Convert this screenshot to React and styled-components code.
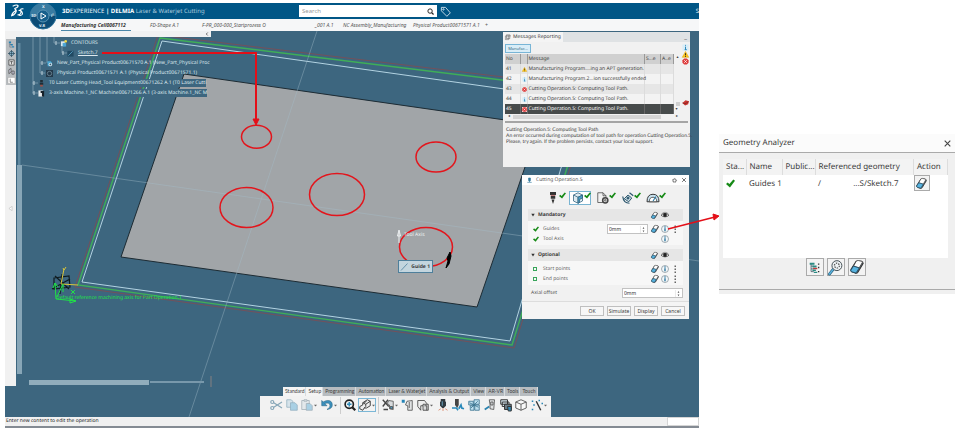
import React from 'react';
import styled, { createGlobalStyle, css } from 'styled-components';

const GlobalStyle = createGlobalStyle`
  *, *::before, *::after { box-sizing: border-box; }
  body { margin: 0; background: #fff; }
  body, button, input { font-family: "Noto Sans", "Open Sans", sans-serif; }
  body { font-size: 6px; line-height: 8px; color: #3c3c3c; text-rendering: geometricPrecision; }
  button { margin: 0; padding: 0; border: 0; background: none; color: inherit; font-size: inherit; line-height: inherit; }
  ul { margin: 0; padding: 0; list-style: none; }
  table { border-collapse: collapse; table-layout: fixed; width: 100%; }
  th, td { padding: 0; font-weight: 400; text-align: left; white-space: nowrap; }
  p, h1, h2, h3 { margin: 0; font-size: inherit; }
`;

/* ---------- page ---------- */
const Page = styled.div`
  position: relative;
  display: flex;
  min-height: 100vh;
  padding: 3px 5px 7px;
  gap: 20px;
`;
const Shell = styled.main`
  flex: 1;
  min-width: 0;
  display: flex;
  flex-direction: column;
`;
const Side = styled.aside`
  flex: 0 0 236px;
  padding-top: 131px;
`;
const Annotations = styled.svg`
  position: absolute;
  top: 0;
  left: 0;
  pointer-events: none;
`;
const Glyph = styled.svg`
  display: block;
  flex: none;
  width: ${(p) => p.$s || 8}px;
  height: ${(p) => p.$s || 8}px;
  overflow: visible;
`;

/* ---------- icons ---------- */
const Check = ({ s }) => (
  <Glyph $s={s} viewBox="0 0 16 16"><path d="M0 9l3-3 3 3 7-8 3 2-9 12z" fill="#178a17" /></Glyph>
);
const Eraser = ({ s }) => (
  <Glyph $s={s} viewBox="0 0 16 16" strokeLinejoin="round">
    <path d="M7 1.500h6q2 .5 2 2.500L9 14q-1 1.500-3 1l-4-1.500Q.5 12.500 1 11z" fill="#54646e" stroke="#333" strokeWidth="1.200" />
    <path d="M7 1.500Q8 .5 9.500 .6L13.500 1.500q1 .5.5 1.500L10.500 9 4 7z" fill="#fdfdfd" stroke="#444" />
    <path d="M4 7l6.500 2-3 5q-.5.8-1.500.6L2 13.500Q.6 13 1 11.500z" fill="#58b4e0" stroke="#234f68" />
  </Glyph>
);
const Info = ({ s }) => (
  <Glyph $s={s} viewBox="0 0 16 16">
    <circle cx="8" cy="8" r="7" fill="#f4f8fa" stroke="#7c8b94" strokeWidth="1.400" />
    <path d="M8 6.500v6" stroke="#1f6c98" strokeWidth="2.600" /><circle cx="8" cy="4" r="1.500" fill="#1f6c98" />
  </Glyph>
);
const Eye = ({ s }) => (
  <Glyph $s={s} viewBox="0 0 16 16">
    <path d="M0 8.500Q8 1 16 8.500 8 15 0 8.500z" fill="#fff" stroke="#333" strokeWidth="1.400" />
    <circle cx="8" cy="8" r="3.800" fill="#222" /><path d="M1 6Q8-1 15 6" fill="none" stroke="#555" />
  </Glyph>
);
const Warn = ({ s }) => (
  <Glyph $s={s} viewBox="0 0 16 16">
    <path d="M8 1l7.500 13.500H.5z" fill="#ffc61a" stroke="#d69b00" /><path d="M8 5v5M8 11.500v2" stroke="#222" strokeWidth="2" />
  </Glyph>
);
const Note = ({ s }) => (
  <Glyph $s={s} viewBox="0 0 16 16">
    <path d="M1 1h14v14H1z" fill="#d7edf8" /><path d="M8 6v7M6 13h5M8 2v2" stroke="#2483b8" strokeWidth="2.200" />
  </Glyph>
);
const Fault = ({ s, boxed }) => (
  <Glyph $s={s} viewBox="0 0 16 16">
    {boxed && <path d="M0 0h16v16H0z" fill="#f6c9c9" />}
    <path d="M5 1h6l4 4v6l-4 4H5l-4-4V5z" fill="#de3b3b" /><path d="M5 5l6 6M11 5l-6 6" stroke="#fff" strokeWidth="1.800" />
  </Glyph>
);
const Dots = () => (
  <Glyph $s={8} viewBox="0 0 16 16"><path d="M7 1h3v3H7zM7 7h3v3H7zM7 13h3v3H7z" fill="#666" /></Glyph>
);
const Cross = ({ s }) => (
  <Glyph $s={s} viewBox="0 0 16 16"><path d="M3 3l10 10M13 3L3 13" stroke="#444" strokeWidth="2" /></Glyph>
);
const Gear = ({ s }) => (
  <Glyph $s={s} viewBox="0 0 16 16" fill="none" stroke="#444">
    <circle cx="8" cy="8" r="4.500" strokeWidth="2" /><circle cx="8" cy="8" r="6.500" strokeWidth="2" strokeDasharray="2.500 2.600" />
  </Glyph>
);
const TreeGlyph = ({ s }) => (
  <Glyph $s={s} viewBox="0 0 16 16">
    <path d="M3 2v12h4M3 6h4M3 10h4" fill="none" stroke="#345" />
    <path d="M1 1h7v3H1zM5 5h6v3H5z" fill="#2b8a83" /><path d="M6 8.500h6v2H6z" fill="#c43636" />
    <path d="M5 11h5v2H5zM7 14h5v2H7z" fill="#2b8a83" /><path d="M13 2h2v2h-2zM13 7h2v2h-2zM13 13h2v2h-2z" fill="#333" />
  </Glyph>
);
const Lens = ({ s }) => (
  <Glyph $s={s} viewBox="0 0 16 16">
    <path d="M5.500 10L1.500 15" stroke="#28617f" strokeWidth="3" strokeLinecap="round" />
    <path d="M5.500 10L1.500 15" stroke="#5bb3dd" strokeWidth="1.600" strokeLinecap="round" />
    <circle cx="9.500" cy="6" r="5.300" fill="#eef3f5" stroke="#3d474d" />
    <circle cx="9.500" cy="6" r="2.600" fill="none" stroke="#555" strokeWidth="1.400" strokeDasharray="1.500 1.200" />
  </Glyph>
);
const Search = () => (
  <Glyph $s={7} viewBox="0 0 16 16" fill="none" stroke="#222" strokeWidth="2.200"><circle cx="7" cy="7" r="5" /><path d="M10.500 10.500L15 15" strokeWidth="3" /></Glyph>
);

/* ---------- top bar ---------- */
const TopBar = styled.header`
  position: relative;
  flex: 0 0 16px;
  display: grid;
  grid-template-columns: 57px 237px 138px 1fr auto;
  align-items: center;
  background: #005686;
  color: #fff;
`;
const Logo = styled.svg`
  width: 13px;
  height: 14px;
  margin-left: 6px;
`;
const Product = styled.h1`
  font-size: 6px;
  font-weight: 400;
  color: #a9cadd;
  white-space: nowrap;
  b { color: #fff; }
  span { color: #e5eff5; }
`;
const SearchBox = styled.label`
  display: flex;
  align-items: center;
  height: 12px;
  padding: 0 3px;
  background: #fff;
`;
const SearchInput = styled.input`
  flex: 1;
  min-width: 0;
  padding: 0;
  border: 0;
  outline: 0;
  font-size: 6px;
  &::placeholder { color: #999; }
`;
const Compass = styled.svg`
  position: absolute;
  left: 24px;
  top: 0;
  width: 28px;
  height: 28px;
  z-index: 2;
`;
const Tag = styled.svg`
  width: 11px;
  height: 11px;
  margin-left: 3px;
`;
const TabStrip = styled.nav`
  flex: 0 0 12px;
  display: grid;
  grid-template-columns: 89px 52px 113px 28px 70px 72px auto;
  justify-content: start;
  align-items: stretch;
  padding-left: 56px;
  background: #f6f7f8;
`;
const DocTab = styled.button`
  justify-self: start;
  text-align: left;
  white-space: nowrap;
  font-style: italic;
  font-weight: ${(p) => (p.$active ? 700 : 400)};
  font-size: 5px;
  color: #555;
  border-bottom: 1px solid transparent;
  ${(p) => p.$active && css`
    min-width: 70px;
    color: #333;
    border-color: #4a86a8;
  `}
`;

/* ---------- viewport ---------- */
const Viewport = styled.section`
  position: relative;
  flex: 1;
  min-height: 386px;
  overflow: hidden;
  display: flex;
  align-items: flex-start;
  background: #3d667f;
`;
const Scene = styled.svg`
  position: absolute;
  inset: 0;
  width: 100%;
  height: 100%;
  font-family: "Noto Sans", sans-serif;
`;
const SideRail = styled.div`
  position: relative;
  width: 11px;
  height: 355px;
  background: #f1f1f1;
`;
const RailTools = styled.div`
  margin: 8px 0 0 1px;
  display: flex;
  flex-direction: column;
  align-items: center;
  gap: 1px;
  padding: 1px 0;
  background: #b9bdc0;
`;
const RailButton = styled.button`
  height: 8px;
`;
const RailHandle = styled.button`
  display: block;
  margin: 121px 0 0 3px;
`;
const TreePanel = styled.div`
  position: relative;
  width: 195px;
`;
const TreeCap = styled.div`
  display: flex;
  align-items: center;
  justify-content: flex-end;
  height: 6px;
  padding-right: 2px;
  background: #f0f1f2;
`;
const TreeRows = styled.ul`
  padding-top: 1px;
`;
const TreeRow = styled.li`
  display: flex;
  align-items: center;
  gap: 4px;
  height: 10px;
  padding-left: ${(p) => p.$pad}px;
  color: #dfe9ee;
  font-size: 5px;
  white-space: nowrap;
  a { color: inherit; }
  span { ${(p) => p.$band && css`background: #3d667f;`} }
`;

const Guide = styled.div`
  position: absolute;
  left: 393px;
  top: 229px;
  display: flex;
  align-items: center;
  justify-content: space-between;
  width: 35px;
  height: 13px;
  padding: 0 2px 0 1px;
  border: 1px solid #4e7f9b;
  background: #c3d5de;
  font-size: 5px;
  font-weight: 700;
  white-space: nowrap;
`;

/* ---------- floating windows ---------- */
const Window = styled.section`
  position: absolute;
  right: ${(p) => p.$right}px;
  top: ${(p) => p.$top}px;
  width: ${(p) => p.$width}px;
  background: #f1f1f1;
`;
const MessageHead = styled.header`
  display: flex;
  justify-content: space-between;
  align-items: center;
  height: 10px;
  padding-right: 3px;
  background: #dfe2e4;
`;
const HeadTab = styled.h2`
  display: flex;
  align-items: center;
  gap: 2px;
  height: 10px;
  padding: 0 2px;
  background: #f4f4f4;
  font-weight: 400;
  font-size: 5px;
`;
const MessageBody = styled.div`
  display: grid;
  grid-template-columns: 1fr 9px;
  padding: 2px 0 0 2px;
`;
const Filter = styled.button`
  display: block;
  width: 26px;
  height: 9px;
  margin: 0 0 1px;
  border: 1px solid #78b5d6;
  background: #d9edf7;
  font-size: 4px;
  line-height: 7px;
  color: #36697f;
`;
const LogArea = styled.div`
  display: grid;
  grid-template-columns: 169px 1fr;
`;
const LogTable = styled.table`
  font-size: 5px;
  th { height: 10px; border-right: 1px solid #999; background: #d0d0d0; }
  th, td { padding-left: 1px; }
`;
const LogRow = styled.tr`
  td { height: 10px; border-right: 1px solid #dcdcdc; background: ${(p) => (p.$alt ? '#e6e6e6' : '#f3f3f3')}; }
  ${(p) => p.$selected && css`
    color: #fff;
    td { background: #474b4b; border-right-color: #666; }
  `}
`;
const VScroll = styled.div`
  display: flex;
  flex-direction: column;
  align-items: center;
  justify-content: space-between;
  font-size: 4px;
`;
const Thumb = styled.div`
  width: 4px;
  height: 4px;
  background: #cfcfcf;
`;
const HScroll = styled.div`
  display: flex;
  justify-content: space-between;
  align-items: center;
  height: 6px;
  padding: 0 3px;
  font-size: 4px;
`;
const HThumb = styled.div`
  flex: 1;
  height: 4px;
  margin: 0 15px 0 3px;
  background: #d5d5d5;
`;
const Severity = styled.div`
  display: flex;
  flex-direction: column;
  align-items: center;
`;
const Purge = styled.button`
  margin-top: 34px;
`;
const Detail = styled.div`
  min-height: 44px;
  margin: 1px 2px 2px;
  padding: 4px 1px;
  border-top: 2px solid #a5a5a5;
  font-family: Lato, sans-serif;
  font-size: 5px;
  line-height: 6px;
  white-space: nowrap;
`;

const DialogHead = styled.header`
  display: flex;
  align-items: center;
  gap: 4px;
  height: 10px;
  padding: 0 2px 0 5px;
  background: #fff;
  h2 { flex: 1; font-weight: 400; font-size: 5px; color: #555; }
`;
const Steps = styled.div`
  display: flex;
  gap: 3px;
  padding: 6px 0 4px 22px;
`;
const Step = styled.button`
  display: flex;
  align-items: center;
  width: 22px;
  height: 14px;
  padding: 0 1px 0 2px;
  border: 1px solid ${(p) => (p.$active ? '#79b4d2' : 'transparent')};
  background: ${(p) => (p.$active ? '#fff' : 'transparent')};
`;
const StepCheck = styled.span`
  align-self: flex-start;
`;
const Groups = styled.div`
  display: flex;
  flex-direction: column;
  gap: 4px;
  padding: 0 6px;
`;
const Group = styled.section`
  background: #f7f7f7;
`;
const GroupHead = styled.header`
  display: grid;
  grid-template-columns: 10px 1fr 10px 10px 12px;
  align-items: center;
  height: 12px;
  background: #e6e6e6;
  h3 { font-size: 5px; }
  svg:first-child { margin-left: 3px; }
`;
const Rows = styled.div`
  padding: 3px 0 1px;
`;
const Field = styled.div`
  display: grid;
  grid-template-columns: 10px 1fr auto 10px 10px 12px;
  align-items: center;
  height: 10px;
  padding-left: 5px;
  font-size: 5px;
  color: #666;
`;
const Spin = styled.span`
  display: flex;
  align-items: center;
  width: ${(p) => p.$w}px;
  height: 10px;
  margin-right: ${(p) => p.$gap || 0}px;
  border: 1px solid #c2c2c2;
  background: #fff;
`;
const SpinInput = styled.input`
  flex: 1;
  min-width: 0;
  width: 10px;
  padding: 0 1px;
  border: 0;
  outline: 0;
  background: none;
  font-size: 5px;
  color: #333;
`;
const Square = styled.input`
  appearance: none;
  width: 4px;
  height: 4px;
  margin: 0;
  border: 1px solid #39a55b;
`;
const Offset = styled.div`
  display: flex;
  align-items: center;
  justify-content: space-between;
  padding: 3px 6px 3px 9px;
  font-size: 5px;
  color: #555;
`;
const Actions = styled.footer`
  display: flex;
  justify-content: flex-end;
  gap: 3px;
  padding: 4px 4px 3px;
  border-top: 1px solid #ddd;
  background: #f4f4f4;
`;
const PushButton = styled.button`
  width: 24px;
  height: 10px;
  border: 1px solid #bfbfbf;
  background: #f7f7f7;
  font-size: 5px;
  line-height: 8px;
`;

/* ---------- action bar ---------- */
const ActionBar = styled.div`
  position: absolute;
  left: 255px;
  bottom: 0;
`;
const ActionTabs = styled.div`
  display: flex;
  width: max-content;
  margin-left: 23px;
`;
const ActionTab = styled.button`
  height: 9px;
  padding: 0 1px 0 2px;
  border-right: 1px solid #d8dbdd;
  background: ${(p) => (p.$active ? '#f4f4f4' : '#b7bcc0')};
  font-family: Lato, sans-serif;
  font-size: 5px;
  line-height: 9px;
  white-space: nowrap;
`;
const ToolRow = styled.div`
  display: flex;
  align-items: center;
  justify-content: space-between;
  height: 21px;
  width: 291px;
  padding: 0 3px 3px 9px;
  background: #f2f2f2;
`;
const Tool = styled.button`
  display: flex;
  align-items: center;
  gap: 1px;
  border: 1px solid ${(p) => (p.$on ? '#7bb7d6' : 'transparent')};
`;
const Divider = styled.div`
  width: 1px;
  height: 17px;
  background: #cdcdcd;
`;
const StatusBar = styled.footer`
  flex: 0 0 11px;
  display: flex;
  justify-content: space-between;
  border-bottom: 2px solid #848b93;
  background: #f0f0f0;
  padding-left: 1px;
  font-size: 5px;
  line-height: 9px;
  color: #222;
`;
const CommandInput = styled.input`
  width: 32px;
  height: 9px;
  padding: 0;
  border: 1px solid #d5d5d5;
  background: #fff;
  font-size: 5px;
`;

/* ---------- analyzer ---------- */
const Analyzer = styled.section`
  padding-bottom: 4px;
  background: #f0f0f0;
`;
const AnalyzerHead = styled.header`
  display: flex;
  justify-content: space-between;
  align-items: center;
  height: 19px;
  padding: 0 3px 0 4px;
  border-bottom: 1px solid #aaa;
  background: #fbfbfb;
  h2 { font-size: 8px; font-weight: 400; }
`;
const AnalyzerBody = styled.div`
  padding: 6px 7px 13px 4px;
  border-bottom: 1px solid #aaa;
`;
const TableWrap = styled.div`
  min-height: 99px;
  background: #fff;
`;
const GeoTable = styled.table`
  font-size: 8px;
  line-height: 12px;
  th { height: 16px; border-right: 1px solid #ddd; background: #f3f3f3; }
  td { height: 17px; }
  th, td { padding-left: 3px; }
  .action { padding-left: 0; }
`;
const Reference = styled.span`
  display: flex;
  justify-content: space-between;
  padding-right: 15px;
`;
const SquareButton = styled.button`
  display: inline-flex;
  align-items: center;
  justify-content: center;
  width: ${(p) => p.$s}px;
  height: ${(p) => p.$s}px;
  border: 1px solid #aaa;
  background: #f3f3f3;
`;
const AnalyzerTools = styled.div`
  display: flex;
  justify-content: center;
  gap: 3px;
`;

const logs = [
  [41, Warn, 'Manufacturing Program....ing an APT generation.'],
  [42, Note, 'Manufacturing Program.2...ion successfully ended'],
  [43, Fault, 'Cutting Operation.5: Computing Tool Path.'],
  [44, Note, 'Cutting Operation.5: Computing Tool Path.'],
  [45, Fault, 'Cutting Operation.5: Computing Tool Path.'],
];

const stepArt = [
  <g key="a"><path d="M4 0h8v4H4zM5 5h6v4H5zM6 10h4l-2 6z" fill="#333" /><path d="M5 4.500h6" stroke="#b55" /></g>,
  <g key="b" fill="#dceaf1" stroke="#2d607c"><path d="M2 4l6-3 6 3v8l-6 3-6-3z" /><path d="M2 4l6 3 6-3M8 7v8" fill="none" /><path d="M8 7l6-3v4l-4 2v4l-2 1z" fill="#4b9dc4" /></g>,
  <g key="c" fill="none" stroke="#444"><path d="M9 14H1V1h7l4 4v2" /><path d="M8 1v4h4" /><circle cx="11" cy="11" r="3.500" strokeWidth="2" fill="#ddd" /><circle cx="11" cy="11" r="1" /></g>,
  <g key="d" fill="none" stroke="#2b566d"><path d="M3 9l5-5 5 4-4 5z" fill="#cfdfe7" strokeWidth="1.300" /><path d="M1 6q1 9 9 9M10 1l5 4" strokeWidth="1.600" /><circle cx="8" cy="8" r="1.500" fill="#2b566d" /></g>,
  <g key="e" fill="#fff" stroke="#333"><path d="M0 13Q0 3 8 3t8 10z" fill="#c9e2ef" strokeWidth="1.300" /><path d="M3 13q0-6 5-6t5 6z" /><path d="M8 12l4-6" stroke="#2d7ca5" strokeWidth="1.500" /></g>,
];

const toolArt = {
  cut: <g fill="none" stroke="#87a7b8" strokeWidth="1.600"><circle cx="3" cy="4" r="2" /><circle cx="3" cy="12" r="2" /><path d="M5 5l11 7M5 11l11-7" /></g>,
  copy: <g fill="#d6e3ea" stroke="#91afbf"><path d="M1 1h6l2 2v8H1z" /><path d="M6 5h6l3 3v7H6z" fill="#a9d0e4" /></g>,
  paste: <g fill="#e3e8eb" stroke="#a0aeb6"><path d="M1 2h10v12H1z" /><path d="M4 1h4v2H4z" /><path d="M7 6h5l3 3v6H7z" fill="#a9d0e4" /></g>,
  undo: <path d="M1 2v7h7L5 6q6-2 7 2 1 3-4 6 7-1 7-6 0-6-6-6-3 0-6 2z" fill="#3d91bd" stroke="#276686" strokeWidth=".8" />,
  zoom: <g fill="none" stroke="#222"><circle cx="7" cy="7" r="5.500" strokeWidth="2.200" /><path d="M11 11l4 4" strokeWidth="3" /><path d="M7 4v6M4 7h6" stroke="#318cba" strokeWidth="2" /></g>,
  part: <g fill="#eee" stroke="#333" strokeWidth="1.200"><path d="M1 10l4-2V5l6-4 4 2v6l-5 3H7l-2 3-4-2z" /><path d="M5 5l4 2 6-4M9 7v3l-2 2" fill="none" /><path d="M7 5l3-2" /></g>,
  mill: <g fill="#d9dcde" stroke="#454545"><path d="M9 2l6 1v11l-5-1V8L7 6z" /><path d="M1 1l8 9M8 1L1 10M2 14h6" fill="none" strokeWidth="1.800" /><path d="M11 10h3v3h-3z" fill="#4d9dc5" /></g>,
  machine: <g fill="#e1e3e4" stroke="#444"><path d="M8 3l7-1v13H9V9L6 8z" /><path d="M11 4v8" /><path d="M1 1h4v4H1z" fill="#2684b6" stroke="none" /></g>,
  shape: <g fill="#eee" stroke="#333"><path d="M1 2h9l3 4-3 3H5v6L1 10z" /><path d="M8 7h7v8H8z" fill="#d9dadb" /><path d="M10 9h3v6" fill="none" /></g>,
  laser: <g><path d="M5 0h6v3l1 1v5L9 12H7L4 9V4l1-1z" fill="#303a40" /><path d="M7 3v6" stroke="#79c0e2" /><path d="M8 12v4M5 13l-3 2M11 13l3 2" stroke="#d77855" /></g>,
  drill: <g><path d="M4 0h5v8l-2 4-3-4z" fill="#444" /><path d="M0 12h6l2 3M9 13l3-5 1 4 3 1" fill="none" stroke="#2989ba" strokeWidth="2.200" /></g>,
  grid: <g fill="#bfe0ef" stroke="#2b6988"><path d="M1 3h6v5H1zM8 1h7v6H8zM3 9h5v6H3zM9 8h6v7H9z" /><path d="M2 5l12 6M4 12l9-9" /></g>,
  probe: <g fill="#e1e3e4" stroke="#444"><path d="M7 1h7l-1 13-5-1V7z" /><path d="M9 4h3v4H9z" /><path d="M1 14l6-4" stroke="#2b83af" strokeWidth="2.500" /></g>,
  stack: <g fill="#d6e6ee" stroke="#333" strokeWidth="1.300"><path d="M1 1h9v6H1zM3 4h9v6H3z" /><path d="M6 7h9v7H6z" fill="#6b7b84" /><path d="M10 10h5v6h-4z" fill="#358ab3" /></g>,
  box: <g fill="#f8f8f8" stroke="#555" strokeWidth="1.200"><path d="M1 4l7-3 7 3v8l-7 3-7-3z" /><path d="M1 4l7 3 7-3M8 7v8" fill="none" /></g>,
  wand: <g fill="none" stroke="#333" strokeWidth="1.800"><path d="M7 3l6 12" /><path d="M1 3h2M3 8h2M1 14h2M10 2h2M14 6h2" stroke="#2a86b4" /></g>,
};
const tools = [['cut'], ['copy'], ['paste', 1], ['undo', 1], null, ['zoom'], ['part', 1, 1], null, ['mill', 1], ['machine'], ['shape', 1], ['laser'], ['drill'], ['grid'], ['probe'], ['stack'], ['box'], ['wand', 1]];

const treeArt = [
  <g key="0"><path d="M2 3h9v11H2z" fill="#d9e7ef" /><path d="M6 7h8v8H6z" fill="#4aa5d4" /><circle cx="13" cy="3" r="3" fill="#efd84b" /></g>,
  <g key="1"><path d="M1 2h14v13H1z" fill="#214a63" /><path d="M3 13L13 3" stroke="#68bce5" strokeWidth="1.500" /></g>,
  <g key="2"><path d="M3 3h8l3 4-3 7H4z" fill="#4ba9d5" /><circle cx="10" cy="10" r="4" fill="#dceaf1" /><circle cx="10" cy="10" r="2" fill="#335e77" /></g>,
  <g key="3"><path d="M0 0h16v16H0z" fill="#23394a" /><circle cx="8" cy="8" r="5" fill="none" stroke="#6d8695" strokeWidth="2" /></g>,
  <g key="4"><path d="M5 0h6v5H5zM4 6h8v5H4z" fill="#1f2d36" /><path d="M5 11h6v4H5z" fill="#9e4f45" /></g>,
  <g key="5"><path d="M1 1h10v14H1z" fill="#e8eaec" /><path d="M6 2h8v13H9V7H6z" fill="#16212a" /></g>,
];
const railArt = [
  <g key="a" fill="#2783b4"><path d="M2 1h5v4H2zM6 7h5v3H6zM9 12h5v3H9z" /><path d="M4 5v9h5M4 8h3" fill="none" stroke="#456" /></g>,
  <g key="b" fill="none" stroke="#28475a" strokeWidth="1.600"><circle cx="8" cy="8" r="5" fill="#9cc9e0" /><path d="M8 0v16M0 8h16" /></g>,
  <g key="c" fill="#e4e4e4" stroke="#333" strokeWidth="1.500"><path d="M2 2h12v12H2z" /><path d="M5 6h6M8 6v6" /></g>,
  <g key="d" fill="#ccd" stroke="#333" strokeWidth="1.400"><path d="M2 13V4l5-3v8zM9 14V7h5v7z" /></g>,
  <g key="e" fill="#fff" stroke="#999"><path d="M0 1h16v14H0z" /><path d="M5 4v8h6" stroke="#555" strokeWidth="1.500" /></g>,
];
const tree = [
  [44, 'CONTOURS'], [51, 'Sketch.7'],
  [30, 'New_Part_Physical Product00671570 A.1 (New_Part_Physical Proc'],
  [30, 'Physical Product00671571 A.1 (Physical Product00671571.1)'],
  [22, 'T0 Laser Cutting Head_Tool Equipment00671262 A.1 (T0 Laser Cutti', true],
  [22, '3-axis Machine.1_NC Machine00671266 A.1 (3-axis Machine.1_NC M', true],
];

function SceneDrawing() {
  return (
    <Scene viewBox="5 31 694 386" preserveAspectRatio="xMinYMin slice" fill="none">
      <path d="M184 74L540 125 525 167 477 307 121 257z" fill="#a1a5a8" stroke="#1d2b33" />
      <path d="M158 35L602 89 570 168 514 348 75 287z" stroke="#74515b" />
      <path d="M160 38L600 92 567 168 512 345 78 285z" stroke="#3fae58" strokeWidth="1.400" />
      <path d="M162 41L590 101 561 168 510 341 82 282z" stroke="#b3d3e2" />
      <path d="M317 31L189 417M22 165L699 261" stroke="#a5bdca" strokeOpacity=".5" strokeWidth=".8" />
      <g stroke="#e3151c" strokeWidth="1.500">
        <ellipse cx="256.500" cy="136.700" rx="15" ry="11.500" />
        <ellipse cx="436" cy="157" rx="20" ry="15" />
        <ellipse cx="246.500" cy="207.500" rx="26.500" ry="20" />
        <ellipse cx="337" cy="194.500" rx="27.500" ry="21" />
        <ellipse cx="426" cy="247" rx="26.500" ry="19.500" />
      </g>
      <path d="M450 252l-3 6 1 3-2 7 3-4 2-8z" fill="#000" stroke="#000" />
      <path d="M399 243v-10M397.500 236l1.500-6 1.500 6z" stroke="#eef1f2" />
      <text x="404" y="236" fontSize="5" fill="#eef1f2">Tool Axis</text>
      <g stroke="#101c20" strokeWidth="1.200"><path d="M54 278l15-2 1 11-16 2zM62 274l-2 20M52 289l18-10M55 276l14 13" /></g>
      <path d="M61 284l3-15M61 284l17 1M63 268l1 2 2-3" stroke="#d9c63d" />
      <g stroke="#1fe247"><path d="M56 299l-1-16M53 288l2-5 3 4M56 299l20 2M70 299l6 2-6 2zM57 297l6-13v8M71 294l4-4M71 290l4 4" /></g>
      <text x="56" y="299" fontSize="5" fill="#1fe247">Default reference machining axis for Part Operation.1</text>
      <rect x="17" y="165" width="5" height="209" fill="#88a6b7" />
      <path d="M18 43h2.500v122H18z" fill="#6189a0" />
      <path d="M29 380h120v5H29z" fill="#91adbc" /><path d="M150 382h54" stroke="#7898ab" strokeWidth="2" /><path d="M211 376v11" stroke="#617380" strokeWidth="2" />
      <path d="M40 37v36M47 37v26M54 37v6M33 93V37M40 63h6M40 73h5M32 83h6M32 93h6M54 43h6M62 53h5M62 46v7" stroke="#8ba8b7" strokeWidth=".7" />
      <path d="M42 61v4M42 71v4M34 81v4M34 91v4M56 41v4M63 51v4" stroke="#c2d3dc" />
    </Scene>
  );
}

function Tree() {
  return (
    <TreePanel>
      <TreeCap>
        <button aria-label="Collapse tree"><Glyph $s={4} viewBox="0 0 16 16"><path d="M11 2L5 8l6 6" fill="none" stroke="#444" strokeWidth="3" /></Glyph></button>
      </TreeCap>
      <TreeRows>
        {tree.map(([pad, text, band], i) => (
          <TreeRow key={text} $pad={pad} $band={band}>
            <Glyph $s={7} viewBox="0 0 16 16">{treeArt[i]}</Glyph>
            {i === 1 ? <a href="#sketch">{text}</a> : <span>{text}</span>}
          </TreeRow>
        ))}
      </TreeRows>
    </TreePanel>
  );
}

function Messages() {
  return (
    <Window $right={9} $top={1} $width={187} aria-label="Messages">
      <MessageHead>
        <HeadTab>
          <Glyph $s={6} viewBox="0 0 16 16" fill="#ddd" stroke="#444"><path d="M1 5h9v10H1zM4 2h9v10H4zM7 5h9" /></Glyph>
          Messages Reporting
        </HeadTab>
        <span>_</span>
      </MessageHead>
      <MessageBody>
        <div>
          <Filter>Manufac...</Filter>
          <LogArea>
            <LogTable>
              <colgroup><col width="15" /><col width="7" /><col /><col width="16" /><col width="13" /></colgroup>
              <thead><tr><th>No</th><th /><th>Message</th><th>S...e</th><th>A..e</th></tr></thead>
              <tbody>
                {logs.map(([no, Mark, text], i) => (
                  <LogRow key={no} $alt={i % 2 === 0} $selected={no === 45}>
                    <td>{no}</td><td><Mark s={5} boxed={no === 45} /></td><td>{text}</td><td /><td />
                  </LogRow>
                ))}
              </tbody>
            </LogTable>
            <VScroll><span>▴</span><div><Thumb /><span>▾</span></div></VScroll>
          </LogArea>
          <HScroll><span>◂</span><HThumb /><span>▸</span></HScroll>
        </div>
        <Severity>
          <Note s={7} /><Warn s={7} /><Fault s={7} />
          <Purge aria-label="Clear messages"><Glyph $s={7} viewBox="0 0 16 16"><path d="M1 9l7-6 8 2-2 7-7 3z" fill="#c7342f" /><path d="M1 9l6 2 8-5" fill="none" stroke="#732020" strokeWidth="1.500" /></Glyph></Purge>
        </Severity>
      </MessageBody>
      <Detail>
        <p>Cutting Operation.5: Computing Tool Path</p>
        <p>An error occurred during computation of tool path for operation Cutting Operation.5.</p>
        <p>Please, try again. If the problem persists, contact your local support.</p>
      </Detail>
    </Window>
  );
}

const Stepper = () => <Glyph $s={7} viewBox="0 0 16 16"><path d="M1 0v16" stroke="#ccc" /><path d="M6 6l2-4 2 4zM6 10l2 4 2-4z" fill="#555" /></Glyph>;
const Caret = () => <Glyph $s={4} viewBox="0 0 16 16"><path d="M1 3h14L8 14z" fill="#333" /></Glyph>;

function Operation() {
  return (
    <Window $right={10} $top={144} $width={167} aria-label="Cutting operation">
      <DialogHead>
        <Glyph $s={5} viewBox="0 0 16 16"><path d="M5 0h6v8l-3 4-3-4zM1 14h14" fill="#357b9f" stroke="#357b9f" strokeWidth="2" /></Glyph>
        <h2>Cutting Operation.5</h2><Gear s={5} /><Cross s={6} />
      </DialogHead>
      <Steps>
        {stepArt.map((art, i) => (
          <Step key={i} $active={i === 1} aria-label={`Step ${i + 1}`}>
            <Glyph $s={12} viewBox="0 0 16 16">{art}</Glyph><StepCheck><Check s={7} /></StepCheck>
          </Step>
        ))}
      </Steps>
      <Groups>
        <Group>
          <GroupHead><Caret /><h3>Mandatory</h3><Eraser s={7} /><Eye s={8} /></GroupHead>
          <Rows>
            <Field>
              <Check s={6} /><label htmlFor="guides">Guides</label>
              <Spin $w={41} $gap={3}><SpinInput id="guides" defaultValue="0mm" /><Stepper /></Spin>
              <Eraser s={8} /><Info s={8} /><Dots />
            </Field>
            <Field><Check s={6} /><span>Tool Axis</span><i /><i /><Info s={8} /></Field>
          </Rows>
        </Group>
        <Group>
          <GroupHead><Caret /><h3>Optional</h3><Eraser s={7} /><Eye s={8} /></GroupHead>
          <Rows>
            {['Start points', 'End points'].map((name) => (
              <Field key={name}>
                <Square type="checkbox" id={name} /><label htmlFor={name}>{name}</label><i />
                <Eraser s={8} /><Info s={8} /><Dots />
              </Field>
            ))}
          </Rows>
        </Group>
      </Groups>
      <Offset>
        <label htmlFor="offset">Axial offset</label>
        <Spin $w={61}><SpinInput id="offset" defaultValue="0mm" /><Stepper /></Spin>
      </Offset>
      <Actions>{['OK', 'Simulate', 'Display', 'Cancel'].map((t) => <PushButton key={t}>{t}</PushButton>)}</Actions>
    </Window>
  );
}

function Actionbar() {
  return (
    <ActionBar>
      <ActionTabs>
        {['Standard', 'Setup', 'Programming', 'Automation', 'Laser & Waterjet', 'Analysis & Output', 'View', 'AR-VR', 'Tools', 'Touch'].map((t, i) => (
          <ActionTab key={t} $active={i < 2}>{t}</ActionTab>
        ))}
      </ActionTabs>
      <ToolRow>
        {tools.map((t, i) => (t ? (
          <Tool key={t[0]} $on={t[2]} aria-label={t[0]}>
            <Glyph $s={12} viewBox="0 0 16 16">{toolArt[t[0]]}</Glyph>
            {t[1] && <Glyph $s={3} viewBox="0 0 16 16"><path d="M0 4h16l-8 9z" fill="#666" /></Glyph>}
          </Tool>
        ) : <Divider key={i} />))}
      </ToolRow>
    </ActionBar>
  );
}

function GeometryAnalyzer() {
  return (
    <Analyzer>
      <AnalyzerHead><h2>Geometry Analyzer</h2><button aria-label="Close"><Cross s={9} /></button></AnalyzerHead>
      <AnalyzerBody>
        <TableWrap>
          <GeoTable>
            <colgroup><col width="23" /><col width="36" /><col width="33" /><col /><col width="34" /></colgroup>
            <thead><tr><th>Sta...</th><th>Name</th><th>Public...</th><th>Referenced geometry</th><th>Action</th></tr></thead>
            <tbody>
              <tr>
                <td><Check s={9} /></td><td>Guides 1</td><td />
                <td><Reference><span>/</span><span>...S/Sketch.7</span></Reference></td>
                <td className="action"><SquareButton $s={16} aria-label="Remove"><Eraser s={11} /></SquareButton></td>
              </tr>
            </tbody>
          </GeoTable>
        </TableWrap>
        <AnalyzerTools>
          <SquareButton $s={18} aria-label="Tree"><TreeGlyph s={11} /></SquareButton>
          <SquareButton $s={18} aria-label="Inspect"><Lens s={15} /></SquareButton>
          <SquareButton $s={18} aria-label="Erase"><Eraser s={14} /></SquareButton>
        </AnalyzerTools>
      </AnalyzerBody>
    </Analyzer>
  );
}

const docs = ['Manufacturing Cell0067112', 'FD-Shape A.1', 'F-PR_000-000_Startprozess O', '_001 A.1', 'NC Assembly_Manufacturing', 'Physical Product00671571 A.1', '+'];

export default function App() {
  return (
    <Page>
      <GlobalStyle />
      <Shell>
        <TopBar>
          <Logo viewBox="0 0 24 26" fill="none" stroke="#fff" strokeWidth="2">
            <path d="M3 4q8-4 10-1 1 3-7 6M7 10q5 1 1 7-3 4-7 5 1-6 8-10M14 12q6-1 4 5-2 4-6 3M23 9q-6-1-5 3 4 4 3 7-2 3-6 2" />
          </Logo>
          <Product><b>3D</b><span>EXPERIENCE</span><b> | DELMIA</b> Laser &amp; Waterjet Cutting</Product>
          <SearchBox><SearchInput aria-label="Search" placeholder="Search" /><Search /></SearchBox>
          <Tag viewBox="0 0 16 16" fill="none" stroke="#d6e6ef" strokeWidth="1.300"><path d="M2 2l6 0 7 8-5 5-8-8z" /><circle cx="5" cy="5" r="1" /></Tag>
          <span>S</span>
          <Compass viewBox="0 0 28 28">
            <circle cx="14" cy="13" r="13" fill="#0c4c76" stroke="#2c7199" />
            <path d="M1 13A13 13 0 0 1 27 13L20 13A6 6 0 0 0 8 13z" fill="#397ba1" />
            <circle cx="14" cy="13" r="6" fill="#185f8b" stroke="#6ba1bf" strokeWidth=".8" />
            <path d="M12 10l5 3-5 3z" fill="none" stroke="#fff" />
            <g fill="#e6f1f6" fontSize="4" fontWeight="700"><text x="13" y="5">X</text><text x="2" y="14">3D</text><text x="22" y="14">i²</text><text x="10" y="24">V.R</text></g>
          </Compass>
        </TopBar>
        <TabStrip>{docs.map((t, i) => <DocTab key={t} $active={i === 0}>{t}</DocTab>)}</TabStrip>
        <Viewport>
          <SceneDrawing />
          <SideRail>
            <RailTools>
              {railArt.map((art) => <RailButton key={art.key} aria-label="View option"><Glyph $s={7} viewBox="0 0 16 16">{art}</Glyph></RailButton>)}
            </RailTools>
            <RailHandle aria-label="Collapse rail"><Glyph $s={5} viewBox="0 0 16 16"><path d="M13 1L3 8l10 7z" fill="#fff" stroke="#bbb" strokeWidth="2" /></Glyph></RailHandle>
          </SideRail>
          <Tree />
          <Guide><Glyph $s={8} viewBox="0 0 16 16"><path d="M2 15L15 1" stroke="#477c9a" strokeWidth="1.500" /></Glyph>Guide 1</Guide>
          <Messages />
          <Operation />
          <Actionbar />
        </Viewport>
        <StatusBar><span>Enter new content to edit the operation</span><CommandInput aria-label="Command" /></StatusBar>
      </Shell>
      <Side><GeometryAnalyzer /></Side>
      <Annotations width="960" height="435" viewBox="0 0 960 435" fill="none" stroke="#e40f18">
        <path d="M102 53h154v67" strokeWidth="2" /><path d="M253 119h6l-3 6z" fill="#e40f18" />
        <path d="M668 229l47-12" strokeWidth="1.500" /><path d="M713 214l6 2-5 4z" fill="#e40f18" />
      </Annotations>
    </Page>
  );
}
